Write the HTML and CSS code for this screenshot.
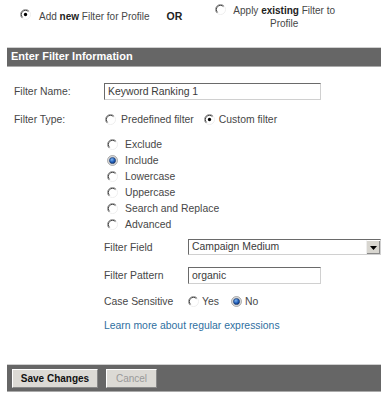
FILE: index.html
```
<!DOCTYPE html>
<html>
<head>
<meta charset="utf-8">
<link rel="stylesheet" href="styles.css">
</head>
<body>
<svg class="defs" width="0" height="0">
  <defs>
    <radialGradient id="blue" cx="40%" cy="35%" r="70%">
      <stop offset="0" stop-color="#7fb4f0"/>
      <stop offset="0.6" stop-color="#1d5cb8"/>
      <stop offset="1" stop-color="#0b2f72"/>
    </radialGradient>
    <symbol id="r-off" viewBox="0 0 12 12">
      <circle cx="6" cy="6" r="5.5" fill="#fff"/>
      <path d="M9.9 2.1 A5.5 5.5 0 0 0 2.1 9.9" stroke="#999" fill="none"/>
      <path d="M9.2 2.8 A4.5 4.5 0 0 0 2.8 9.2" stroke="#333" fill="none"/>
      <path d="M9.9 2.1 A5.5 5.5 0 0 1 2.1 9.9" stroke="#eee" fill="none"/>
    </symbol>
    <symbol id="r-on" viewBox="0 0 12 12">
      <circle cx="6" cy="6" r="5.5" fill="#fff"/>
      <path d="M9.9 2.1 A5.5 5.5 0 0 0 2.1 9.9" stroke="#999" fill="none"/>
      <path d="M9.2 2.8 A4.5 4.5 0 0 0 2.8 9.2" stroke="#333" fill="none"/>
      <path d="M9.9 2.1 A5.5 5.5 0 0 1 2.1 9.9" stroke="#eee" fill="none"/>
      <circle cx="6" cy="6" r="1.8" fill="#000"/>
    </symbol>
    <symbol id="r-blue" viewBox="0 0 12 12">
      <circle cx="6" cy="6" r="5.4" fill="#e4e4e4" stroke="#8a8a8a" stroke-width="0.8"/>
      <circle cx="6" cy="6" r="3.4" fill="url(#blue)" stroke="#1a2f55" stroke-width="0.6"/>
    </symbol>
  </defs>
</svg>

<div class="top">
  <div class="choice choice-new">
    <svg class="radio"><use href="#r-on"/></svg>
    <span>Add <b>new</b> Filter for Profile</span>
  </div>
  <div class="or">OR</div>
  <div class="choice choice-existing">
    <svg class="radio"><use href="#r-off"/></svg>
    <span class="two-line">Apply <b>existing</b> Filter to<br>Profile</span>
  </div>
</div>

<div class="bar header">Enter Filter Information</div>

<div class="form">
  <div class="row row-name">
    <div class="label">Filter Name:</div>
    <div class="textbox name-box">Keyword Ranking 1</div>
  </div>
  <div class="row row-type">
    <div class="label">Filter Type:</div>
    <div class="radios">
      <svg class="radio"><use href="#r-off"/></svg><span class="opt">Predefined filter</span>
      <svg class="radio radio-gap"><use href="#r-on"/></svg><span class="opt">Custom filter</span>
    </div>
  </div>
  <ul class="options">
    <li><svg class="radio"><use href="#r-off"/></svg><span>Exclude</span></li>
    <li><svg class="radio"><use href="#r-blue"/></svg><span>Include</span></li>
    <li><svg class="radio"><use href="#r-off"/></svg><span>Lowercase</span></li>
    <li><svg class="radio"><use href="#r-off"/></svg><span>Uppercase</span></li>
    <li><svg class="radio"><use href="#r-off"/></svg><span>Search and Replace</span></li>
    <li><svg class="radio"><use href="#r-off"/></svg><span>Advanced</span></li>
  </ul>
  <div class="sub">
    <div class="subrow row-field">
      <div class="sublabel">Filter Field</div>
      <div class="select">
        <span class="select-text">Campaign Medium</span>
        <span class="select-btn"><svg width="7" height="4" viewBox="0 0 7 4"><path d="M0 0H7L3.5 4Z" fill="#000"/></svg></span>
      </div>
    </div>
    <div class="subrow row-pattern">
      <div class="sublabel">Filter Pattern</div>
      <div class="textbox pattern-box">organic</div>
    </div>
    <div class="subrow row-case">
      <div class="sublabel">Case Sensitive</div>
      <div class="radios">
        <svg class="radio"><use href="#r-off"/></svg><span class="opt">Yes</span>
        <svg class="radio radio-gap2"><use href="#r-blue"/></svg><span class="opt">No</span>
      </div>
    </div>
    <div class="subrow row-link">
      <a class="link" href="#">Learn more about regular expressions</a>
    </div>
  </div>
</div>

<div class="bar footer">
  <button class="btn btn-save">Save Changes</button>
  <button class="btn btn-cancel">Cancel</button>
</div>
</body>
</html>
```

FILE: styles.css
```
html, body {
  margin: 0;
  padding: 0;
  background: #fff;
}
body {
  width: 381px;
  height: 400px;
  overflow: hidden;
  font-family: "Liberation Sans", Arial, sans-serif;
  font-size: 10.4px;
  color: #474747;
}
.defs {
  position: absolute;
  width: 0;
  height: 0;
}
.radio {
  width: 11px;
  height: 11px;
  flex: none;
  display: block;
}

/* top choice */
.top {
  height: 47px;
  display: flex;
  align-items: flex-start;
  font-size: 10px;
}
.top b {
  color: #222;
}
.choice {
  display: flex;
  align-items: flex-start;
}
.choice-new {
  margin-left: 20px;
  margin-top: 9px;
}
.choice-new span {
  margin-left: 8px;
  line-height: 13px;
  margin-top: 1px;
}
.or {
  margin-left: 17px;
  margin-top: 10px;
  font-weight: bold;
  font-size: 10.5px;
  line-height: 13px;
  color: #222;
}
.choice-existing {
  margin-left: 33px;
  margin-top: 4px;
}
.choice-existing .radio {
  margin-top: 0px;
}
.two-line {
  margin-left: 7px;
  text-align: center;
  line-height: 13px;
}

/* bars */
.bar {
  margin-left: 7px;
  background: #666;
  border-top: 1px solid #d0d0d0;
  border-bottom: 1px solid #aaa;
  box-sizing: border-box;
}
.header {
  height: 20px;
  color: #fff;
  font-weight: bold;
  font-size: 11px;
  line-height: 17px;
  padding-left: 4px;
}
.footer {
  margin-top: 28px;
  height: 28px;
  display: flex;
  align-items: center;
  padding-left: 5px;
  gap: 8px;
}

/* form */
.form {
  padding-top: 10px;
  padding-left: 14px;
}
.row {
  display: flex;
  align-items: center;
  height: 28px;
}
.label {
  width: 90px;
  flex: none;
}
.textbox {
  box-sizing: border-box;
  height: 17px;
  background: #fff;
  border-top: 1px solid #6a6a6a;
  border-left: 1px solid #6a6a6a;
  border-right: 1px solid #d0d0d0;
  border-bottom: 1px solid #d0d0d0;
  padding-left: 3px;
  line-height: 15px;
  font-size: 10.4px;
  color: #3a3a3a;
}
.name-box {
  width: 217px;
}
.radios {
  display: flex;
  align-items: center;
}
.radios .opt {
  margin-left: 4px;
}
.row-type .radios {
  margin-left: 1px;
}
.row-type .opt:first-of-type {
  margin-left: 5px;
}
.radio-gap {
  margin-left: 10px;
}
.options {
  list-style: none;
  margin: 3px 0 0 0;
  padding: 0 0 0 93px;
}
.options li {
  height: 16px;
  display: flex;
  align-items: center;
}
.options li span {
  margin-left: 7px;
}
.sub {
  padding-left: 90px;
}
.subrow {
  display: flex;
  align-items: center;
  height: 26px;
}
.row-field {
  height: 30px;
}
.sublabel {
  width: 84px;
  flex: none;
}
.select {
  box-sizing: border-box;
  width: 195px;
  height: 16px;
  display: flex;
  align-items: stretch;
  background: #fff;
  border-top: 1px solid #6a6a6a;
  border-left: 1px solid #6a6a6a;
  border-right: 1px solid #d0d0d0;
  border-bottom: 1px solid #d0d0d0;
}
.select-text {
  flex: 1;
  padding-left: 3px;
  line-height: 14px;
  color: #3a3a3a;
}
.select-btn {
  width: 13px;
  background: #d8d6d0;
  border-left: 1px solid #eee;
  border-top: 1px solid #fff;
  box-shadow: inset -1px -1px 0 #888;
  display: flex;
  align-items: center;
  justify-content: center;
}
.pattern-box {
  width: 133px;
}
.row-case .radios .opt {
  margin-left: 3px;
}
.radio-gap2 {
  margin-left: 12px;
}
.row-link {
  height: 22px;
}
.link {
  color: #2f6f9f;
  text-decoration: none;
}

/* buttons */
.btn {
  font-family: "Liberation Sans", Arial, sans-serif;
  font-size: 10px;
  height: 19px;
  padding: 0;
  background: #dcdad5;
  border-top: 1px solid #fff;
  border-left: 1px solid #fff;
  border-right: 1px solid #888;
  border-bottom: 1px solid #888;
  box-sizing: border-box;
  line-height: 17px;
  margin: 0;
}
.btn-save {
  width: 86px;
  font-weight: bold;
  color: #111;
}
.btn-cancel {
  width: 51px;
  color: #999;
}
```
